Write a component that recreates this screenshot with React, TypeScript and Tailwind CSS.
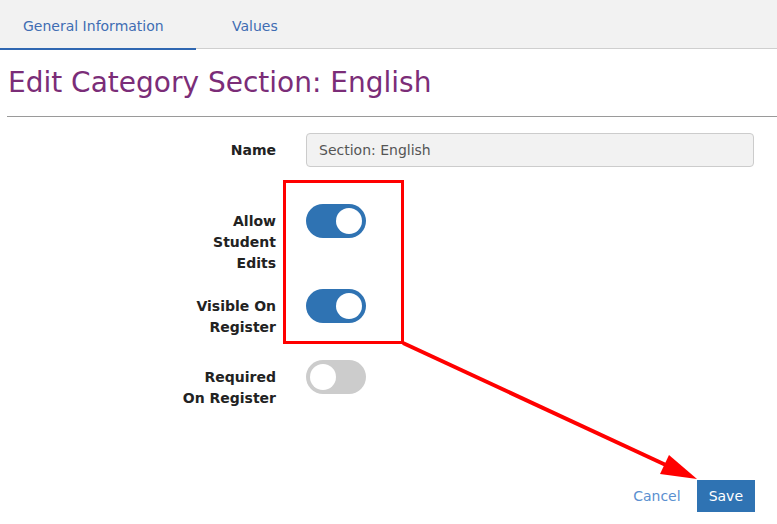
import { Fragment } from "react"

function Toggle({ on }: { on: boolean }) {
  return (
    <div
      className={`flex h-[34px] w-[60px] items-center rounded-full p-[4px] ${
        on ? "justify-end bg-[#2f73b3]" : "justify-start bg-[#cccccc]"
      }`}
    >
      <div className="h-[26px] w-[26px] rounded-full bg-white" />
    </div>
  )
}

export default function App() {
  const toggles = [
    { label: ["Allow", "Student", "Edits"], on: true, mt: "mt-[37px]" },
    { label: ["Visible On", "Register"], on: true, mt: "mt-[15px]" },
    { label: ["Required", "On Register"], on: false, mt: "mt-[22px]" },
  ]

  return (
    <div className="relative h-[524px] w-[777px] overflow-hidden bg-white font-['DejaVu_Sans',sans-serif]">
      {/* tabs */}
      <nav className="flex h-[49px] items-start border-b border-[#cfcfcf] bg-[#f2f2f2] text-[14px] text-[#3f6db3]">
        <div className="flex h-[50px] w-[196px] items-center border-b-2 border-[#2f67b1] pl-[23px] pt-[4px]">
          General Information
        </div>
        <div className="flex h-[48px] items-center pl-[36px] pt-[4px]">Values</div>
      </nav>

      <div className="px-[7px]">
        <h1 className="pl-[1px] pt-[14px] text-[28px] leading-[40px] text-[#7b2d78]">
          Edit Category Section: English
        </h1>
        <div className="mt-[13px] border-t border-[#9a9a9a] -mr-[7px]" />

        <div className="grid grid-cols-[269px_448px] gap-x-[30px] text-[14px]">
          <div className="mt-[16px] flex h-[34px] items-center justify-end font-bold text-[#222]">Name</div>
          <div className="mt-[16px] flex h-[34px] items-center rounded-[4px] border border-[#cccccc] bg-[#f2f2f2] pl-[12px] text-[#555]">
            Section: English
          </div>

          {toggles.map((t, i) => (
            <Fragment key={i}>
              <div className={`${t.mt} pt-[7px] text-right font-bold leading-[21px] text-[#222]`}>
                {t.label.map((l) => (
                  <div key={l}>{l}</div>
                ))}
              </div>
              <div className={t.mt}>
                <Toggle on={t.on} />
              </div>
            </Fragment>
          ))}
        </div>

        <div className="mt-[71px] flex items-center justify-end gap-[16px] pr-[15px] text-[14px]">
          <button className="text-[#5a8fd0]">Cancel</button>
          <button className="h-[32px] bg-[#2f73b3] px-[12px] text-white">Save</button>
        </div>
      </div>

      {/* annotation */}
      <div className="absolute left-[283px] top-[180px] h-[164px] w-[121px] border-[3px] border-[#ff0000]" />
      <svg className="absolute left-0 top-0" width="777" height="524">
        <line x1="403" y1="343" x2="668" y2="466" stroke="#ff0000" strokeWidth="4" />
        <polygon points="697,479 660,474 669,455" fill="#ff0000" />
      </svg>
    </div>
  )
}
